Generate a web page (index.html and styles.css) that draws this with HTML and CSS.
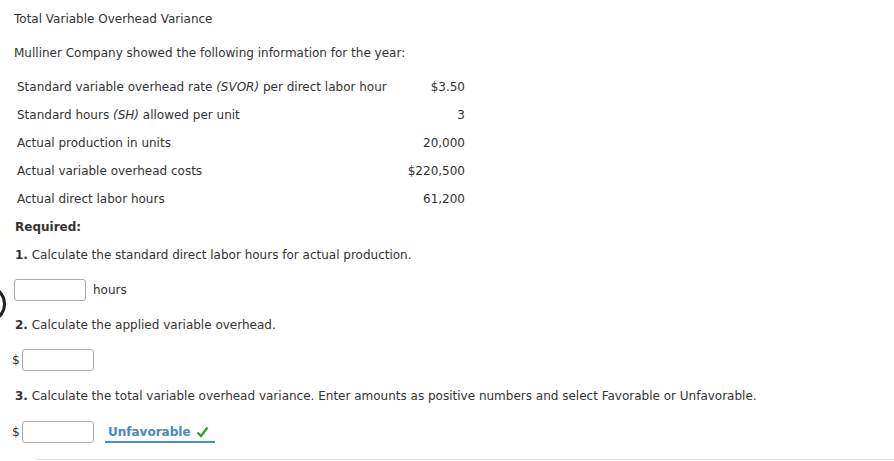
FILE: index.html
```html
<!DOCTYPE html>
<html>
<head>
<meta charset="utf-8">
<link rel="stylesheet" href="styles.css">
</head>
<body>
<div class="page">
  <div class="arc"></div>
  <p class="title">Total Variable Overhead Variance</p>
  <p class="intro">Mulliner Company showed the following information for the year:</p>
  <table class="data">
    <tr><td class="lbl">Standard variable overhead rate <i>(SVOR)</i> per direct labor hour</td><td class="val">$3.50</td></tr>
    <tr><td class="lbl">Standard hours <i>(SH)</i> allowed per unit</td><td class="val">3</td></tr>
    <tr><td class="lbl">Actual production in units</td><td class="val">20,000</td></tr>
    <tr><td class="lbl">Actual variable overhead costs</td><td class="val">$220,500</td></tr>
    <tr><td class="lbl">Actual direct labor hours</td><td class="val">61,200</td></tr>
  </table>
  <p class="req">Required:</p>
  <p class="q q1"><b>1.</b> Calculate the standard direct labor hours for actual production.</p>
  <div class="ans a1"><span class="box"></span><span class="unit">hours</span></div>
  <p class="q q2"><b>2.</b> Calculate the applied variable overhead.</p>
  <div class="ans a2"><span class="cur">$</span><span class="box"></span></div>
  <p class="q q3"><b>3.</b> Calculate the total variable overhead variance. Enter amounts as positive numbers and select Favorable or Unfavorable.</p>
  <div class="ans a3"><span class="cur">$</span><span class="box"></span>
    <span class="sel">Unfavorable <svg class="check" width="13" height="12" viewBox="0 0 13 12"><path d="M1.5 6.5 L5 10 L11.5 1.5" fill="none" stroke="#3a9a3a" stroke-width="2.4"/></svg></span>
  </div>
  <div class="rule"></div>
</div>
</body>
</html>
```
FILE: styles.css
```css
html, body {
  margin: 0;
  padding: 0;
  background: #fff;
}
body {
  font-family: "DejaVu Sans", Verdana, sans-serif;
  font-size: 12px;
  color: #333;
  width: 894px;
  height: 461px;
  overflow: hidden;
}
.page {
  position: relative;
  padding: 11px 0 0 14px;
  height: 450px;
}
p { margin: 0; }
.arc {
  position: absolute;
  left: -32px;
  top: 285px;
  width: 32px;
  height: 32px;
  border: 3px solid #222;
  border-radius: 50%;
}
.title { line-height: 16px; }
.intro { margin-top: 18px; line-height: 16px; }
.data {
  border-collapse: collapse;
  margin-top: 12px;
  margin-left: 1px;
}
.data td {
  height: 28px;
  padding: 0 2px;
  vertical-align: middle;
}
.data .lbl { width: 384px; }
.data .val { width: 60px; text-align: right; }
.req { font-weight: bold; margin-top: 6px; line-height: 16px; padding-left: 1px; }
.q { line-height: 16px; padding-left: 1px; }
.q1 { margin-top: 12px; }
.ans { display: flex; align-items: center; }
.a1 { margin-top: 16px; }
.box {
  display: inline-block;
  width: 70px;
  height: 20px;
  border: 1px solid #aaa;
  border-radius: 3px;
  box-sizing: content-box;
}
.unit { margin-left: 7px; }
.q2 { margin-top: 16px; }
.a2 { margin-top: 16px; margin-left: -2px; }
.cur { width: 10px; }
.q3 { margin-top: 17px; }
.a3 { margin-top: 17px; margin-left: -2px; }
.sel {
  margin-left: 11px;
  color: #4a86c5;
  font-weight: bold;
  font-size: 12px;
  border-bottom: 2px solid #4a8fcc;
  padding: 0 6px 2px 3px;
  margin-top: 3px;
  display: inline-flex;
  align-items: center;
  gap: 5px;
}
.rule {
  position: absolute;
  left: 36px;
  right: 0;
  top: 459px;
  border-top: 1px solid #dde4e4;
}
```
